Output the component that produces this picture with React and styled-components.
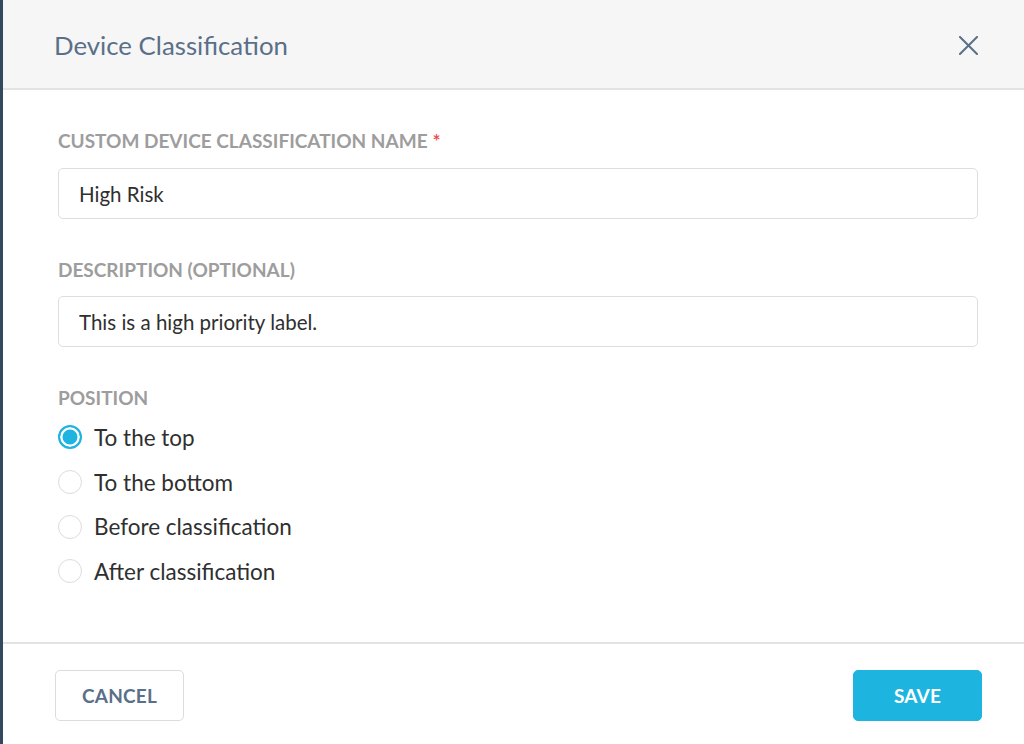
import React, { useState } from "react";
import styled, { createGlobalStyle } from "styled-components";

const Global = createGlobalStyle`
  html, body { margin: 0; padding: 0; background: #34495e; }
  body { font-family: Lato, "Open Sans", sans-serif; }
  * { box-sizing: border-box; }
`;

const Page = styled.div`
  display: flex;
  width: 1024px;
  height: 744px;
  padding-left: 3px;
  background: #34495e;
  overflow: hidden;
`;

const Modal = styled.div`
  flex: 1;
  display: flex;
  flex-direction: column;
  background: #ffffff;
`;

const Header = styled.div`
  height: 90px;
  display: flex;
  align-items: center;
  justify-content: space-between;
  padding: 2px 44px 0 51px;
  background: #f6f6f6;
  border-bottom: 2px solid #e3e3e3;
`;

const Title = styled.h1`
  margin: 0;
  font-size: 25.8px;
  font-weight: 400;
  color: #5a6f88;
`;

const CloseButton = styled.button`
  width: 24px;
  height: 24px;
  padding: 0;
  border: 0;
  background: transparent;
  display: flex;
  align-items: center;
  justify-content: center;
  cursor: pointer;
`;

const Body = styled.div`
  flex: 1;
  padding: 41px 46px 0 55px;
  display: flex;
  flex-direction: column;
`;

const Field = styled.div`
  display: flex;
  flex-direction: column;
  margin-bottom: ${(p) => p.$mb || 0}px;
`;

const Label = styled.label`
  font-size: 19px;
  line-height: 20px;
  font-weight: 700;
  color: #9d9d9d;
  text-transform: uppercase;
  margin-bottom: ${(p) => p.$mb || 16}px;
`;

const Required = styled.span`
  color: #f0504f;
  margin-left: 5px;
`;

const Input = styled.input`
  height: 51px;
  width: 100%;
  border: 1.5px solid #dedede;
  border-radius: 5px;
  padding: 0 20px;
  font-family: Lato, "Open Sans", sans-serif;
  font-size: 20.5px;
  color: #2f2f2f;
  outline: none;
  background: #fff;
`;

const RadioList = styled.div`
  display: flex;
  flex-direction: column;
`;

const RadioRow = styled.label`
  height: 44.7px;
  display: flex;
  align-items: center;
  gap: 12px;
  cursor: pointer;
  font-size: 22.5px;
  color: #2f2f2f;
`;

const RadioCircle = styled.span`
  width: 24px;
  height: 24px;
  border-radius: 50%;
  flex: none;
  border: ${(p) => (p.$checked ? "2px solid #1db4e0" : "1.5px solid #dcdcdc")};
  background: ${(p) => (p.$checked ? "#1db4e0" : "#fff")};
  box-shadow: ${(p) => (p.$checked ? "inset 0 0 0 2.5px #fff" : "none")};
`;

const Footer = styled.div`
  height: 102px;
  border-top: 2px solid #e3e3e3;
  display: flex;
  align-items: flex-start;
  justify-content: space-between;
  padding: 26px 42px 0 52px;
`;

const Button = styled.button`
  width: 129px;
  height: 51px;
  border-radius: 5px;
  font-family: Lato, "Open Sans", sans-serif;
  font-size: 19px;
  font-weight: 700;
  letter-spacing: 0.2px;
  cursor: pointer;
  border: ${(p) => (p.$primary ? "1.5px solid #1db4e0" : "1.5px solid #dcdcdc")};
  background: ${(p) => (p.$primary ? "#1db4e0" : "#fff")};
  color: ${(p) => (p.$primary ? "#fff" : "#5a6f88")};
`;

const options = ["To the top", "To the bottom", "Before classification", "After classification"];

export default function App() {
  const [pos, setPos] = useState(0);
  return (
    <>
      <Global />
      <Page>
        <Modal>
          <Header>
            <Title>Device Classification</Title>
            <CloseButton aria-label="Close">
              <svg width="19" height="19" viewBox="0 0 19 19">
                <path d="M1 1L18 18M18 1L1 18" stroke="#5a6f88" strokeWidth="2" strokeLinecap="square" />
              </svg>
            </CloseButton>
          </Header>
          <Body>
            <Field $mb={41}>
              <Label $mb={17}>
                Custom Device Classification Name<Required>*</Required>
              </Label>
              <Input defaultValue="High Risk" />
            </Field>
            <Field $mb={41}>
              <Label $mb={16}>Description (optional)</Label>
              <Input defaultValue="This is a high priority label." />
            </Field>
            <Field>
              <Label $mb={7}>Position</Label>
              <RadioList>
                {options.map((o, i) => (
                  <RadioRow key={o} onClick={() => setPos(i)}>
                    <RadioCircle $checked={pos === i} />
                    {o}
                  </RadioRow>
                ))}
              </RadioList>
            </Field>
          </Body>
          <Footer>
            <Button>CANCEL</Button>
            <Button $primary>SAVE</Button>
          </Footer>
        </Modal>
      </Page>
    </>
  );
}
